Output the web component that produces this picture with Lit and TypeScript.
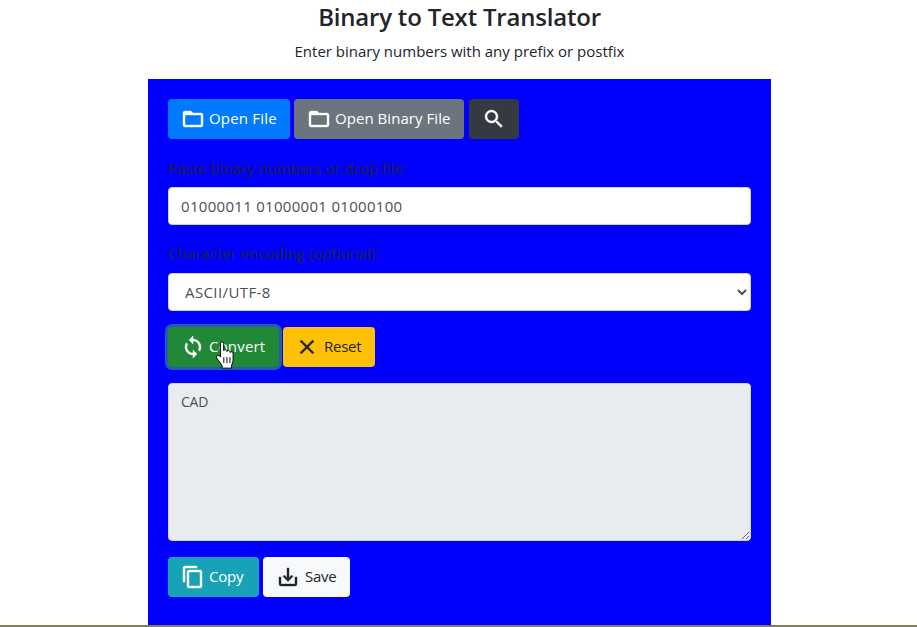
import { LitElement, html, css } from "lit";
import { customElement } from "lit/decorators.js";

const icon = (d: string) => html`<svg class="ic" viewBox="0 0 24 24" width="24" height="24" fill="currentColor" stroke="currentColor" stroke-width="0.4"><path d=${d}></path></svg>`;
const folder = icon("M20 6h-8l-2-2H4c-1.1 0-2 .9-2 2v12c0 1.1.9 2 2 2h16c1.1 0 2-.9 2-2V8c0-1.1-.9-2-2-2zm0 12H4V8h16v10z");
const search = icon("M15.5 14h-.79l-.28-.27A6.471 6.471 0 0 0 16 9.5 6.5 6.5 0 1 0 9.5 16c1.61 0 3.09-.59 4.23-1.57l.27.28v.79l5 4.99L20.49 19l-4.99-5zm-6 0C7.01 14 5 11.99 5 9.5S7.01 5 9.5 5 14 7.01 14 9.5 11.99 14 9.5 14z");
const sync = icon("M12 4V1L8 5l4 4V6c3.31 0 6 2.69 6 6 0 1.01-.25 1.97-.7 2.8l1.46 1.46C19.54 15.03 20 13.57 20 12c0-4.42-3.58-8-8-8zm0 14c-3.31 0-6-2.69-6-6 0-1.01.25-1.97.7-2.8L5.24 7.74C4.46 8.97 4 10.43 4 12c0 4.42 3.58 8 8 8v3l4-4-4-4v3z");
const close = icon("M19 6.41L17.59 5 12 10.59 6.41 5 5 6.41 10.59 12 5 17.59 6.41 19 12 13.41 17.59 19 19 17.59 13.41 12z");
const copy = icon("M16 1H4c-1.1 0-2 .9-2 2v14h2V3h12V1zm3 4H8c-1.1 0-2 .9-2 2v14c0 1.1.9 2 2 2h11c1.1 0 2-.9 2-2V7c0-1.1-.9-2-2-2zm0 16H8V7h11v14z");
const save = icon("M19 12v7H5v-7H3v7c0 1.1.9 2 2 2h14c1.1 0 2-.9 2-2v-7h-2zm-6 .67l2.59-2.58L17 11.5l-5 5-5-5 1.41-1.41L11 12.67V3h2z");

@customElement("app-root")
export class AppRoot extends LitElement {
  static styles = css`
    :host { display: block; font-family: "Open Sans", "Noto Sans", sans-serif; color: #212529; height: 627px; overflow: hidden; position: relative; }
    * { box-sizing: border-box; }
    .wrap { width: 623px; margin-left: 148px; }
    h1 { margin: 0; font-size: 24px; line-height: 34px; font-weight: 600; text-align: center; letter-spacing: -0.2px; }
    .sub { margin: 0; height: 45px; padding-top: 5px; font-size: 15px; line-height: 24px; text-align: center; }
    .panel { height: 546px; background: #0000ff; padding: 20px; display: flex; flex-direction: column; }
    .row { display: flex; gap: 4px; height: 40px; flex: none; }
    .btn { display: inline-flex; align-items: center; height: 40px; border: 1px solid transparent; border-radius: 4px; padding: 0 12px; font: inherit; font-size: 15px; letter-spacing: -0.25px; gap: 4px; color: #fff; }
    .btn span { margin-bottom: 2px; }
    .ic { flex: none; }
    .primary { background: #007bff; width: 122px; letter-spacing: 0.2px; }
    .secondary { background: #6c757d; width: 170px; margin-right: 1px; letter-spacing: 0.05px; }
    .dark { background: #343a40; width: 50px; }
    .success { background: #218838; width: 111px; letter-spacing: 0.18px; box-shadow: 0 0 0 3px rgba(72, 180, 97, 0.5); }
    .warning { background: #ffc107; color: #212529; width: 92px; padding-left: 11px; gap: 5px; }
    .info { background: #17a2b8; width: 91px; }
    .light { background: #f8f9fa; color: #212529; width: 87px; gap: 5px; }
    label { display: block; font-size: 15px; line-height: 24px; height: 24px; color: #212529; }
    .l1 { margin: 17px 0 7px; }
    .l2 { margin: 16px 0 8px; }
    input, select, textarea { display: block; width: 100%; flex: none; border: 1px solid #ced4da; border-radius: 4px; font: inherit; font-size: 15px; color: #495057; background: #fff; }
    input { height: 38px; padding: 6px 12px; letter-spacing: 0.3px; }
    select { height: 38px; padding: 6px 12px; letter-spacing: 0.4px; }
    textarea { height: 158px; padding: 6px 12px; background: #e9ecef; font-size: 14px; line-height: 24px; margin: 16px 0; resize: vertical; outline: none; letter-spacing: -0.25px; }
    .gap { margin-top: 16px; }
    .foot { position: absolute; left: 0; right: 0; top: 625px; height: 2px; background: #7f7f5f; }
    .cursor { position: absolute; left: 215px; top: 341px; }
  `;
  render() {
    return html`
      <div class="wrap">
        <h1>Binary to Text Translator</h1>
        <p class="sub">Enter binary numbers with any prefix or postfix</p>
        <div class="panel">
          <div class="row">
            <button class="btn primary">${folder}<span>Open File</span></button>
            <button class="btn secondary">${folder}<span>Open Binary File</span></button>
            <button class="btn dark">${search}</button>
          </div>
          <label class="l1">Paste binary numbers or drop file:</label>
          <input value="01000011 01000001 01000100" />
          <label class="l2">Character encoding (optional):</label>
          <select><option>ASCII/UTF-8</option></select>
          <div class="row gap">
            <button class="btn success">${sync}<span>Convert</span></button>
            <button class="btn warning">${close}<span>Reset</span></button>
          </div>
          <textarea readonly>CAD</textarea>
          <div class="row">
            <button class="btn info">${copy}<span>Copy</span></button>
            <button class="btn light">${save}<span>Save</span></button>
          </div>
        </div>
      </div>
      <div class="foot"></div>
      <svg class="cursor" width="20" height="28" viewBox="0 0 18 26">
        <path d="M4.8 2.3c0-1.9 3-1.9 3 0V9c.3-1.4 2.7-1.4 3 0v.8c.3-1.3 2.6-1.3 2.9.1v.8c.3-1.1 2.8-1 2.8.8v6c0 2.3-1 3.6-1.4 5.2v2.5H6.3v-2.3c-1.2-2-2.3-3.6-5-7-1.4-2 1-3.6 3.5-1.2V2.3z" fill="#fff" stroke="#000" stroke-width="0.9"></path>
        <path d="M7.9 15v5.5M10.8 15v5.5M13.6 15v5.5" stroke="#000" stroke-width="0.9"></path>
      </svg>
    `;
  }
}
